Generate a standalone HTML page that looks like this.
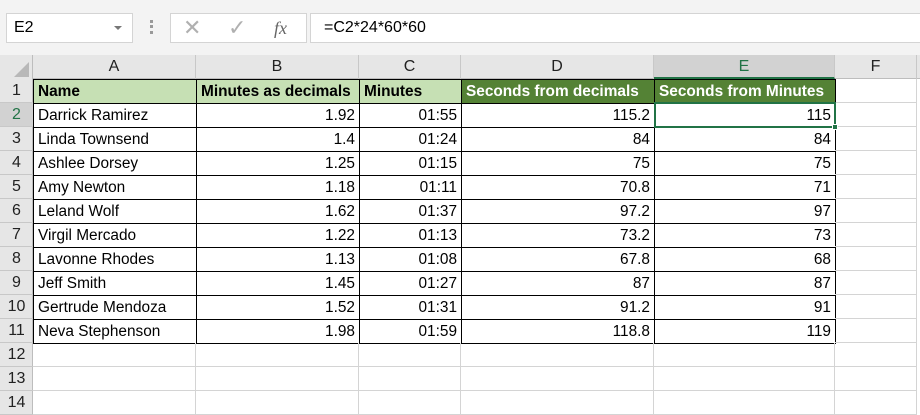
<!DOCTYPE html><html><head><style>
body{margin:0;width:920px;height:414px;overflow:hidden;background:#fff;font-family:"Liberation Sans",Arial,sans-serif;position:relative}
.a{position:absolute;box-sizing:border-box}
.t{font-size:15.4px;line-height:23px;white-space:nowrap;overflow:hidden;padding:0 4px;color:#000}
</style></head><body>
<div class="a" style="left:0;top:0;width:920px;height:55px;background:#f3f3f3"></div>
<div class="a" style="left:6px;top:13px;width:127px;height:30px;background:#fff;border:1px solid #d4d4d4;font-size:16px;line-height:28px;padding-left:7px">E2</div>
<div class="a" style="left:114px;top:26px;width:0;height:0;border-left:4px solid transparent;border-right:4px solid transparent;border-top:4px solid #777"></div>
<div class="a" style="left:150px;top:20px;width:3px;height:14px;border-left:3px dotted #999"></div>
<div class="a" style="left:170px;top:13px;width:137px;height:30px;background:#fff;border:1px solid #d4d4d4"></div>
<div class="a" style="left:183px;top:14px;font-size:22px;color:#b0b0b0;line-height:28px">✕</div>
<div class="a" style="left:228px;top:14px;font-size:22px;color:#b0b0b0;line-height:28px">✓</div>
<div class="a" style="left:274px;top:14px;font-size:18px;color:#666;line-height:28px;font-style:italic;font-family:'Liberation Serif',serif">fx</div>
<div class="a" style="left:310px;top:13px;width:615px;height:30px;background:#fff;border:1px solid #d4d4d4;font-size:16px;line-height:28px;padding-left:13px">=C2*24*60*60</div>
<div id="g"></div>
<script>
var g=document.getElementById('g'),h='';
var cx=[33,196,359,461,654,835,917],L='ABCDEF';
h+='<div class="a" style="left:0;top:55px;width:920px;height:24px;background:#e6e6e6;border-bottom:1px solid #bdbdbd"></div>';
h+='<div class="a" style="left:0;top:55px;width:33px;height:359px;background:#e6e6e6;border-right:1px solid #bdbdbd"></div>';
h+='<div class="a" style="left:14px;top:62px;width:0;height:0;border-left:15px solid transparent;border-bottom:15px solid #b8b8b8"></div>';
for(var i=0;i<6;i++){var sel=i==4;h+='<div class="a" style="left:'+cx[i]+'px;top:55px;width:'+(cx[i+1]-cx[i])+'px;height:24px;border-right:1px solid #c8c8c8;text-align:center;font-size:16px;line-height:24px;'+(sel?'background:#d2d2d2;color:#217346;border-bottom:2px solid #217346;':'color:#222;')+'">'+L[i]+'</div>';}
var d=[["Darrick Ramirez","1.92","01:55","115.2","115"],["Linda Townsend","1.4","01:24","84","84"],["Ashlee Dorsey","1.25","01:15","75","75"],["Amy Newton","1.18","01:11","70.8","71"],["Leland Wolf","1.62","01:37","97.2","97"],["Virgil Mercado","1.22","01:13","73.2","73"],["Lavonne Rhodes","1.13","01:08","67.8","68"],["Jeff Smith","1.45","01:27","87","87"],["Gertrude Mendoza","1.52","01:31","91.2","91"],["Neva Stephenson","1.98","01:59","118.8","119"]];
for(var r=0;r<14;r++){var y=79+r*24;
h+='<div class="a" style="left:0;top:'+y+'px;width:33px;height:24px;border-bottom:1px solid #c8c8c8;text-align:center;font-size:16px;line-height:24px;'+(r==1?'background:#d2d2d2;color:#217346;':'color:#222;')+'">'+(r+1)+'</div>';
for(var c=0;c<6;c++){var st='left:'+cx[c]+'px;top:'+y+'px;width:'+(cx[c+1]-cx[c]+1)+'px;height:25px;',txt='';
if(r<11&&c<5){st+='border:1px solid #000;';}else{st+='border-right:1px solid #d4d4d4;border-bottom:1px solid #d4d4d4;height:24px;width:'+(cx[c+1]-cx[c])+'px;';}
if(r==0&&c<5){var hd=["Name","Minutes as decimals","Minutes","Seconds from decimals","Seconds from Minutes"];txt=hd[c];st+='font-weight:bold;'+(c<3?'background:#c6e0b4;':'background:#548235;color:#fff;');}
else if(r>0&&r<11&&c<5){txt=d[r-1][c];if(c>0)st+='text-align:right;';}
h+='<div class="a t" style="'+st+'">'+txt+'</div>';}}
h+='<div class="a" style="left:654px;top:102px;width:182px;height:26px;border:2px solid #217346"></div>';
h+='<div class="a" style="left:832px;top:124px;width:6px;height:6px;background:#217346;border:1px solid #fff"></div>';
g.innerHTML=h;
</script>
</body></html>
